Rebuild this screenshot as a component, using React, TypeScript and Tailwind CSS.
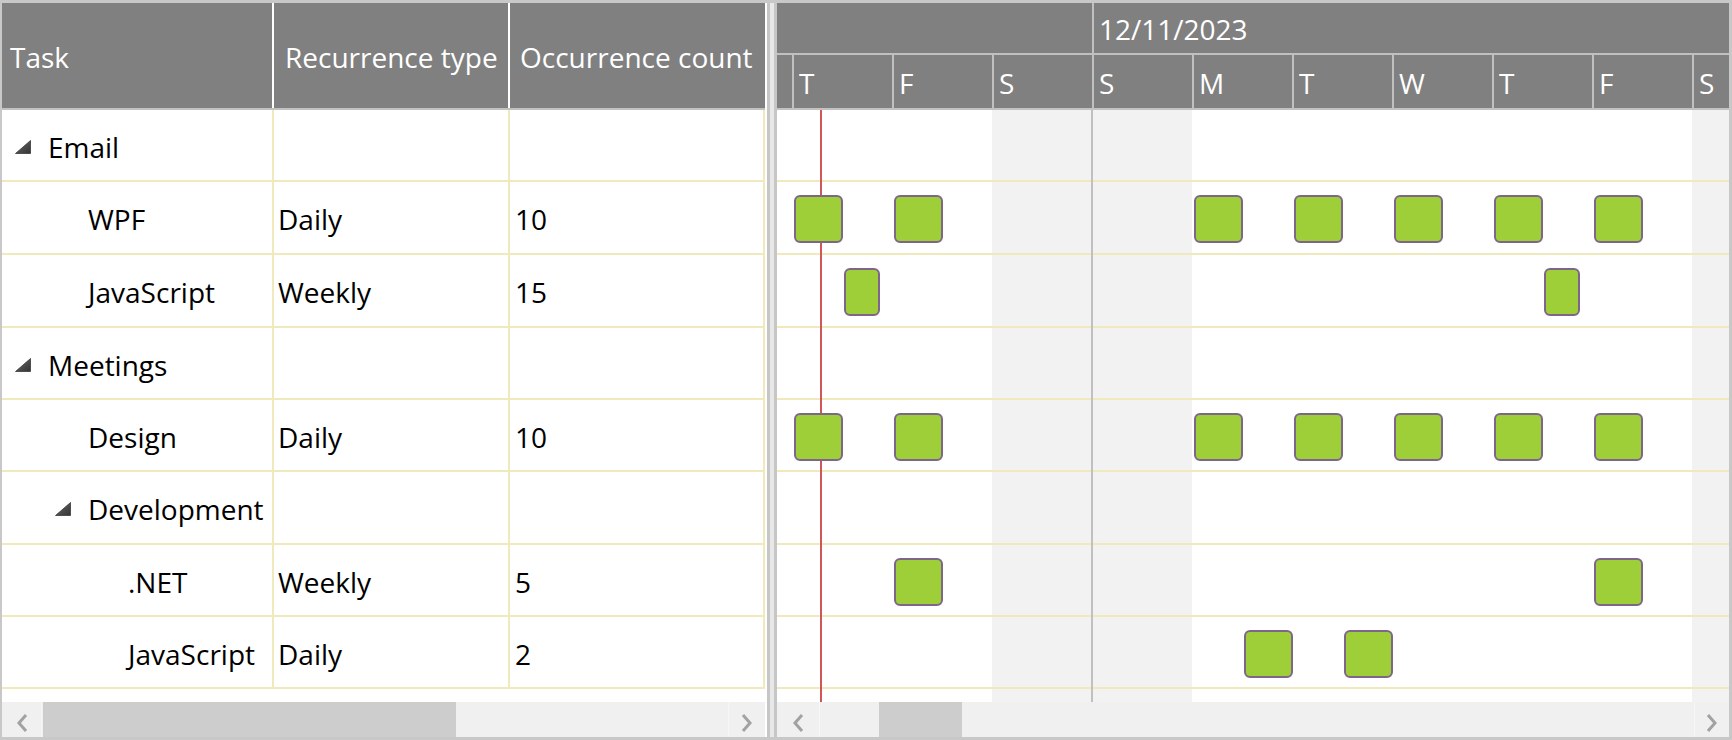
import type { ReactNode } from "react";

type Bar = { day: number; off: number; w: number };

type Row = {
  name: string;
  level: number;
  expander?: boolean;
  type?: string;
  count?: string;
  bars: Bar[];
};

const half = (day: number): Bar => ({ day, off: 2, w: 49 });
const late = (day: number, w = 49): Bar => ({ day, off: 52, w });

const ROWS: Row[] = [
  { name: "Email", level: 0, expander: true, bars: [] },
  { name: "WPF", level: 1, type: "Daily", count: "10", bars: [0, 1, 4, 5, 6, 7, 8].map(half) },
  { name: "JavaScript", level: 1, type: "Weekly", count: "15", bars: [late(0, 36), late(7, 36)] },
  { name: "Meetings", level: 0, expander: true, bars: [] },
  { name: "Design", level: 1, type: "Daily", count: "10", bars: [0, 1, 4, 5, 6, 7, 8].map(half) },
  { name: "Development", level: 1, expander: true, bars: [] },
  { name: ".NET", level: 2, type: "Weekly", count: "5", bars: [half(1), half(8)] },
  { name: "JavaScript", level: 2, type: "Daily", count: "2", bars: [late(4), late(5)] },
];

// the rows are not all the same height on screen (72.4px on average)
const ROW_H = [72, 73, 73, 72, 72, 73, 72, 72];
const ROW_TOP = ROW_H.map((_, i) => ROW_H.slice(0, i).reduce((a, b) => a + b, 0));

const DAYS = ["T", "F", "S", "S", "M", "T", "W", "T", "F", "S"];
const DAY_W = 100;
const FIRST = 15; // part of the previous day showing at the left edge
const WEEKEND = [2, 3, 9];

function Expander() {
  return (
    <svg width="16" height="14" viewBox="0 0 16 14" className="shrink-0">
      <defs>
        <linearGradient id="exp" x1="0" y1="0" x2="1" y2="1">
          <stop offset="0" stopColor="#6a6a6a" />
          <stop offset="1" stopColor="#333333" />
        </linearGradient>
      </defs>
      <polygon points="15.5,0.5 15.5,13.5 0.5,13.5" fill="url(#exp)" stroke="#3a3a3a" strokeWidth="0.8" />
    </svg>
  );
}

function Chevron({ dir }: { dir: "left" | "right" }) {
  return (
    <svg width="14" height="20" viewBox="0 0 14 20" className="mt-[6px]">
      <polyline
        points={dir === "left" ? "11,2 4,10 11,18" : "3,2 10,10 3,18"}
        fill="none"
        stroke="#a2a2a2"
        strokeWidth="3"
      />
    </svg>
  );
}

function ScrollBar({ left, thumbAt, thumbW, right }: { left: number; thumbAt: number; thumbW: number; right: number }) {
  return (
    <div className="h-[35px] shrink-0 flex bg-[#f0f0f0]">
      <div className="flex items-center justify-center shrink-0 border-r border-[#f6f6f6]" style={{ width: left }}>
        <Chevron dir="left" />
      </div>
      <div className="relative flex-1">
        <div className="absolute top-0 bottom-0 bg-[#cdcdcd]" style={{ left: thumbAt, width: thumbW }} />
      </div>
      <div className="flex items-center justify-center shrink-0 border-l border-[#f6f6f6]" style={{ width: right }}>
        <Chevron dir="right" />
      </div>
    </div>
  );
}

function HeadCell({ w, pl, children }: { w?: number; pl: number; children: ReactNode }) {
  return (
    <div
      className="flex items-center bg-[#808080] text-white shrink-0 pt-[3px]"
      style={{ width: w, paddingLeft: pl, flexGrow: w ? 0 : 1 }}
    >
      {children}
    </div>
  );
}

function TreeGrid() {
  return (
    <div className="w-[763px] shrink-0 flex flex-col">
      <div className="h-[107px] shrink-0 flex border-b-2 border-[#c2c2c2] bg-white">
        <HeadCell w={270} pl={8}>Task</HeadCell>
        <div className="w-[2px] bg-white" />
        <HeadCell w={234} pl={11}>Recurrence type</HeadCell>
        <div className="w-[2px] bg-white" />
        <HeadCell pl={10}>Occurrence count</HeadCell>
      </div>
      {ROWS.map((r, i) => (
        <div key={i} className="shrink-0 flex border-b-2 border-[#efe9bb] text-black" style={{ height: ROW_H[i] }}>
          <div className="w-[272px] shrink-0 flex items-center pt-[3px] border-r-2 border-[#efe9bb]">
            <div className="shrink-0" style={{ width: 13 + r.level * 40 }} />
            <div className="w-[33px] shrink-0 flex items-center">{r.expander && <Expander />}</div>
            <span>{r.name}</span>
          </div>
          <div className="w-[236px] shrink-0 flex items-center pt-[3px] pl-[4px] border-r-2 border-[#efe9bb]">
            {r.type}
          </div>
          <div className="flex-1 flex items-center pt-[3px] pl-[5px] border-r-2 border-[#efe9bb]">{r.count}</div>
        </div>
      ))}
      <div className="flex-1" />
      <ScrollBar left={40} thumbAt={1} thumbW={413} right={37} />
    </div>
  );
}

function Splitter() {
  return (
    <div className="w-[12px] shrink-0 flex">
      <div className="w-[2px] bg-white" />
      <div className="w-[3px] bg-[#c6c6c6]" />
      <div className="w-[4px] bg-[#e8e8e8]" />
      <div className="w-[3px] bg-[#c6c6c6]" />
    </div>
  );
}

function Gantt() {
  const weekStart = FIRST + DAY_W * 3;
  return (
    <div className="w-[952px] shrink-0 flex flex-col overflow-hidden">
      <div className="h-[50px] shrink-0 flex bg-[#808080] text-white">
        <div className="shrink-0" style={{ width: weekStart }} />
        <div className="w-[2px] shrink-0 bg-[#c0c0c0]" />
        <div className="flex-1 flex items-center pl-[5px] pt-[2px]">12/11/2023</div>
      </div>
      <div className="h-[2px] shrink-0 bg-[#c0c0c0]" />
      <div className="h-[55px] shrink-0 flex bg-[#808080] text-white border-b-2 border-[#c2c2c2]">
        <div className="shrink-0" style={{ width: FIRST }} />
        {DAYS.map((d, i) => (
          <div key={i} className="w-[100px] shrink-0 flex items-center border-l-2 border-[#c0c0c0] pl-[5px] pt-[3px]">
            {d}
          </div>
        ))}
      </div>
      <div className="relative flex-1 flex flex-col">
        {WEEKEND.map((d) => (
          <div
            key={d}
            className="absolute top-0 bottom-0 bg-[#f2f2f2]"
            style={{ left: FIRST + d * DAY_W, width: DAY_W }}
          />
        ))}
        {ROWS.map((_, i) => (
          <div key={i} className="relative shrink-0 border-b-2 border-[#efe9bb]" style={{ height: ROW_H[i] }} />
        ))}
        <div className="absolute top-0 bottom-0 w-[2px] bg-[#c0c0c0]" style={{ left: weekStart - 1 }} />
        <div className="absolute top-0 bottom-0 left-[43px] w-[2px] bg-[#cf5757]" />
        {ROWS.map((r, i) =>
          r.bars.map((b, j) => (
            <div
              key={`${i}-${j}`}
              className="absolute h-[48px] rounded-[6px] border-2 border-[#7f6589] bg-[#9ecf38]"
              style={{ top: ROW_TOP[i] + 13, left: FIRST + b.day * DAY_W + b.off, width: b.w }}
            />
          ))
        )}
      </div>
      <ScrollBar left={43} thumbAt={59} thumbW={83} right={35} />
    </div>
  );
}

export default function App() {
  return (
    <div
      className="w-[1732px] h-[740px] flex bg-white overflow-hidden border-t-[3px] border-b-[3px] border-l-2 border-r-[3px] border-[#c8c8c8] text-[28px] leading-none"
      style={{ fontFamily: '"Open Sans", "Noto Sans", sans-serif' }}
    >
      <TreeGrid />
      <Splitter />
      <Gantt />
    </div>
  );
}
